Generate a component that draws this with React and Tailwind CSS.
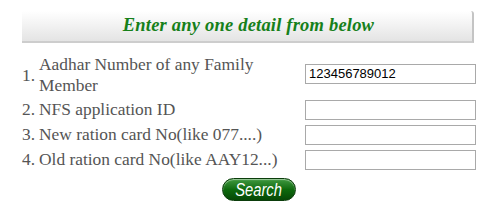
import React from "react";

const rows = [
    { n: "1.", label: "Aadhar Number of any Family Member", value: "123456789012" },
    { n: "2.", label: "NFS application ID", value: "" },
    { n: "3.", label: "New ration card No(like 077....)", value: "" },
    { n: "4.", label: "Old ration card No(like AAY12...)", value: "" }
];

export default function App() {
    return (
        <div className="w-[478px] h-[202px] bg-white overflow-hidden flex flex-col">
            {/* Heading bar */}
            <div className="mt-[11px] ml-[22px] w-[452px] h-[32px] flex items-center justify-center bg-gradient-to-b from-white to-[#e4e4e4] border-b-2 border-[#cdcdcd] border-r-2 border-r-[#c4c4c4] rounded-tr-[3px]">
                <span className="[font-family:Liberation_Serif,serif] italic font-bold text-[18.5px] text-[#16801a] tracking-[0.2px] pl-[3px]">
                    Enter any one detail from below
                </span>
            </div>

            {/* Form rows */}
            <div className="mt-[10px] ml-[22px] flex flex-col">
                {rows.map((r, i) => (
                    <div
                        key={r.n}
                        className={`flex items-center [font-family:Liberation_Serif,serif] text-[17.4px] text-[#555] ${i === 0 ? "h-[44px]" : "h-[25px]"}`}
                    >
                        <span className="w-[17px] shrink-0 leading-[21px]">{r.n}</span>
                        <span className="w-[266px] shrink-0 leading-[21px]">
                            {i === 0 ? (
                                <>
                                    Aadhar Number of any Family
                                    <br />
                                    Member
                                </>
                            ) : (
                                r.label
                            )}
                        </span>
                        <input
                            type="text"
                            defaultValue={r.value}
                            className={`w-[171px] h-[20px] border border-[#a9a9a9] px-[3px] [font-family:Liberation_Sans,sans-serif] text-[13px] text-black outline-none ${i === 0 ? "-mt-[3px]" : ""}`}
                        />
                    </div>
                ))}
            </div>

            {/* Search button */}
            <div className="mt-[6px] ml-[222px]">
                <button className="w-[74px] h-[23px] rounded-full border border-[#0b3d0b] bg-gradient-to-b from-[#3f9a3f] via-[#0d6a0d] to-[#064806] shadow-[inset_0_1px_1px_rgba(255,255,255,0.5)] flex items-center justify-center">
                    <span className="[font-family:Liberation_Sans_Narrow,Liberation_Sans,sans-serif] italic text-[18px] text-white leading-none scale-x-[0.82]">
                        Search
                    </span>
                </button>
            </div>
        </div>
    );
}
